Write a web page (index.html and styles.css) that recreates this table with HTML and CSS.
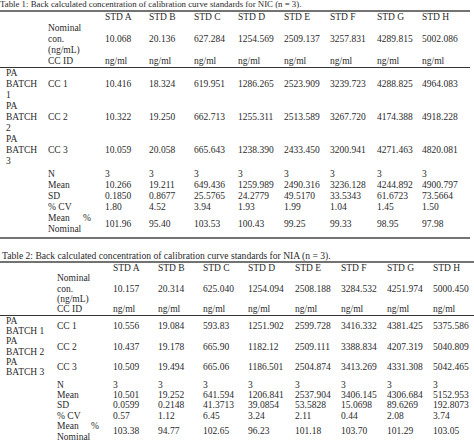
FILE: index.html
```html
<!DOCTYPE html>
<html>
<head>
<meta charset="utf-8">
<link rel="stylesheet" href="styles.css">
</head>
<body>
<p class="caption cap1">Table 1: Back calculated concentration of calibration curve standards for NIC (n = 3).</p>
<table class="tbl t1">
  <colgroup>
    <col class="c1"><col class="c2"><col class="ca"><col class="cb"><col class="cc"><col class="cd"><col class="ce"><col class="cf"><col class="cg"><col class="ch">
  </colgroup>
  <tr><td></td><td></td><td>STD A</td><td>STD B</td><td>STD C</td><td>STD D</td><td>STD E</td><td>STD F</td><td>STD G</td><td>STD H</td></tr>
  <tr><td></td><td>Nominal con. (ng/mL)</td><td>10.068</td><td>20.136</td><td>627.284</td><td>1254.569</td><td>2509.137</td><td>3257.831</td><td>4289.815</td><td>5002.086</td></tr>
  <tr class="head-end"><td></td><td>CC ID</td><td>ng/ml</td><td>ng/ml</td><td>ng/ml</td><td>ng/ml</td><td>ng/ml</td><td>ng/ml</td><td>ng/ml</td><td>ng/ml</td></tr>
  <tr><td class="batch">PA BATCH 1</td><td>CC 1</td><td>10.416</td><td>18.324</td><td>619.951</td><td>1286.265</td><td>2523.909</td><td>3239.723</td><td>4288.825</td><td>4964.083</td></tr>
  <tr><td class="batch">PA BATCH 2</td><td>CC 2</td><td>10.322</td><td>19.250</td><td>662.713</td><td>1255.311</td><td>2513.589</td><td>3267.720</td><td>4174.388</td><td>4918.228</td></tr>
  <tr><td class="batch">PA BATCH 3</td><td>CC 3</td><td>10.059</td><td>20.058</td><td>665.643</td><td>1238.390</td><td>2433.450</td><td>3200.941</td><td>4271.463</td><td>4820.081</td></tr>
  <tr class="stat-first"><td></td><td>N</td><td>3</td><td>3</td><td>3</td><td>3</td><td>3</td><td>3</td><td>3</td><td>3</td></tr>
  <tr><td></td><td>Mean</td><td>10.266</td><td>19.211</td><td>649.436</td><td>1259.989</td><td>2490.316</td><td>3236.128</td><td>4244.892</td><td>4900.797</td></tr>
  <tr><td></td><td>SD</td><td>0.1850</td><td>0.8677</td><td>25.5765</td><td>24.2779</td><td>49.5170</td><td>33.5343</td><td>61.6723</td><td>73.5664</td></tr>
  <tr><td></td><td>% CV</td><td>1.80</td><td>4.52</td><td>3.94</td><td>1.93</td><td>1.99</td><td>1.04</td><td>1.45</td><td>1.50</td></tr>
  <tr class="stat-last"><td></td><td class="just">Mean % Nominal</td><td>101.96</td><td>95.40</td><td>103.53</td><td>100.43</td><td>99.25</td><td>99.33</td><td>98.95</td><td>97.98</td></tr>
</table>

<p class="caption cap2">Table 2: Back calculated concentration of calibration curve standards for NIA (n = 3).</p>
<table class="tbl t2">
  <colgroup>
    <col class="c1"><col class="c2"><col class="ca"><col class="cb"><col class="cc"><col class="cd"><col class="ce"><col class="cf"><col class="cg"><col class="ch">
  </colgroup>
  <tr><td></td><td></td><td>STD A</td><td>STD B</td><td>STD C</td><td>STD D</td><td>STD E</td><td>STD F</td><td>STD G</td><td>STD H</td></tr>
  <tr><td></td><td>Nominal con. (ng/mL)</td><td>10.157</td><td>20.314</td><td>625.040</td><td>1254.094</td><td>2508.188</td><td>3284.532</td><td>4251.974</td><td>5000.450</td></tr>
  <tr class="head-end"><td></td><td>CC ID</td><td>ng/ml</td><td>ng/ml</td><td>ng/ml</td><td>ng/ml</td><td>ng/ml</td><td>ng/ml</td><td>ng/ml</td><td>ng/ml</td></tr>
  <tr><td class="batch">PA BATCH&nbsp;1</td><td>CC 1</td><td>10.556</td><td>19.084</td><td>593.83</td><td>1251.902</td><td>2599.728</td><td>3416.332</td><td>4381.425</td><td>5375.586</td></tr>
  <tr><td class="batch">PA BATCH&nbsp;2</td><td>CC 2</td><td>10.437</td><td>19.178</td><td>665.90</td><td>1182.12</td><td>2509.111</td><td>3388.834</td><td>4207.319</td><td>5040.809</td></tr>
  <tr><td class="batch">PA BATCH&nbsp;3</td><td>CC 3</td><td>10.509</td><td>19.494</td><td>665.06</td><td>1186.501</td><td>2504.874</td><td>3413.269</td><td>4331.308</td><td>5042.465</td></tr>
  <tr class="stat-first"><td></td><td>N</td><td>3</td><td>3</td><td>3</td><td>3</td><td>3</td><td>3</td><td>3</td><td>3</td></tr>
  <tr><td></td><td>Mean</td><td>10.501</td><td>19.252</td><td>641.594</td><td>1206.841</td><td>2537.904</td><td>3406.145</td><td>4306.684</td><td>5152.953</td></tr>
  <tr><td></td><td>SD</td><td>0.0599</td><td>0.2148</td><td>41.3713</td><td>39.0854</td><td>53.5828</td><td>15.0698</td><td>89.6269</td><td>192.8073</td></tr>
  <tr><td></td><td>% CV</td><td>0.57</td><td>1.12</td><td>6.45</td><td>3.24</td><td>2.11</td><td>0.44</td><td>2.08</td><td>3.74</td></tr>
  <tr class="stat-last"><td></td><td class="just">Mean % Nominal</td><td>103.38</td><td>94.77</td><td>102.65</td><td>96.23</td><td>101.18</td><td>103.70</td><td>101.29</td><td>103.05</td></tr>
</table>
</body>
</html>
```

FILE: styles.css
```css
html, body {
  margin: 0;
  padding: 0;
  background: #ffffff;
}

body {
  font-family: "Liberation Serif", "Times New Roman", serif;
  color: #2a2a2a;
  width: 474px;
  overflow: hidden;
}

.caption {
  margin: 0;
  font-size: 8.8px;
  line-height: 11px;
  white-space: nowrap;
}

.cap1 {
  margin-top: -1px;
}

.cap2 {
  padding-left: 2px;
  margin-top: 11px;
  font-size: 9.6px;
}

.tbl {
  border-collapse: collapse;
  table-layout: fixed;
  font-size: 9.5px;
  line-height: 11px;
  border-top: 2px solid #737373;
  border-bottom: 2px solid #737373;
}

.tbl td {
  padding: 0 2px;
  vertical-align: middle;
  text-align: left;
  white-space: nowrap;
}

.tbl td:nth-child(2) {
  white-space: normal;
  padding-right: 12px;
}

.tbl td.batch {
  white-space: normal;
  padding-left: 6px;
  padding-right: 4px;
}

.tbl td.just {
  text-align: justify;
}

.head-end td {
  border-bottom: 1px solid #333333;
}

.stat-first td {
  padding-top: 2px;
}

.stat-last td {
  padding-bottom: 2px;
}

/* Table 1 columns */
.t1 { width: 470px; }
.t1 .c1 { width: 46px; }
.t1 .c2 { width: 57px; }
.t1 .ca { width: 44px; }
.t1 .cb { width: 45px; }
.t1 .cc { width: 44px; }
.t1 .cd { width: 46px; }
.t1 .ce { width: 46px; }
.t1 .cf { width: 47px; }
.t1 .cg { width: 45px; }
.t1 .ch { width: 50px; }

/* Table 2 columns */
.t2 { width: 474px; line-height: 10.35px; }
.t2 .c1 { width: 55px; }
.t2 .c2 { width: 56px; }
.t2 .ca { width: 45px; }
.t2 .cb { width: 45px; }
.t2 .cc { width: 45px; }
.t2 .cd { width: 47px; }
.t2 .ce { width: 46px; }
.t2 .cf { width: 46px; }
.t2 .cg { width: 46px; }
.t2 .ch { width: 43px; }
```
